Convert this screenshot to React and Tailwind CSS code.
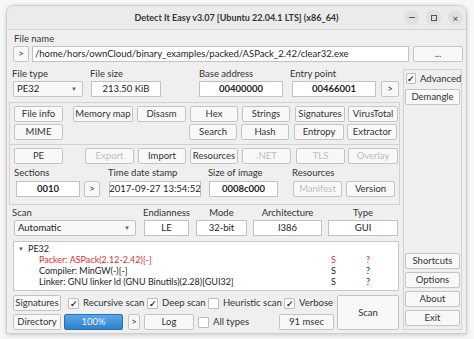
import React from "react";

function Btn({ className = "", disabled = false, children }) {
  return (
    <div
      className={
        "flex h-[16px] shrink-0 items-center justify-center rounded-[2px] border border-[#c4c4c4] bg-[#f8f8f8] leading-none " +
        (disabled ? "text-[#bdbdbd] " : "text-[#333] ") +
        className
      }
    >
      {children}
    </div>
  );
}

function Field({ className = "", bold = false, children }) {
  return (
    <div
      className={
        "flex h-[16px] shrink-0 items-center justify-center border border-[#c2c2c2] bg-white leading-none text-[#222] " +
        (bold ? "font-bold " : "") +
        className
      }
    >
      {children}
    </div>
  );
}

function Combo({ className = "", children }) {
  return (
    <div
      className={
        "flex h-[16px] shrink-0 items-center justify-between rounded-[2px] border border-[#c4c4c4] bg-[#f8f8f8] pl-[3px] pr-[5px] leading-none text-[#222] " +
        className
      }
    >
      <span>{children}</span>
      <span className="text-[6px] text-[#666]">▼</span>
    </div>
  );
}

function Check({ checked, className = "", children }) {
  return (
    <div className={"flex shrink-0 items-center gap-[4px] leading-none " + className}>
      <div className="flex h-[11px] w-[11px] items-center justify-center rounded-[1px] border border-[#bdbdbd] bg-white text-[9px] font-bold text-[#333]">
        {checked ? "✓" : ""}
      </div>
      <span>{children}</span>
    </div>
  );
}

function Label({ className = "", children }) {
  return <div className={"flex h-[13px] items-center leading-none " + className}>{children}</div>;
}

export default function App() {
  return (
    <div className="h-[339px] w-[474px] overflow-hidden whitespace-nowrap bg-[#f7f7f7] pl-[6px] pt-[5px] font-['Lato',sans-serif] text-[9.5px] text-[#333]">
      <div className="flex h-[329px] w-[461px] flex-col overflow-hidden rounded-t-[8px] border border-[#cfcfcf] bg-[#efefef] shadow-[0_1px_4px_rgba(0,0,0,0.18)]">
        {/* title bar */}
        <div className="relative flex h-[24px] shrink-0 items-center justify-center border-b border-[#d6d6d6] bg-[#ebebeb]">
          <span className="text-[9px] font-bold text-[#333]">
            Detect It Easy v3.07 [Ubuntu 22.04.1 LTS] (x86_64)
          </span>
          <div className="absolute right-[3px] top-[4px] flex gap-[7px]">
            <div className="flex h-[15px] w-[15px] items-center justify-center rounded-full bg-[#e0e0e0]">
              <div className="h-[1px] w-[6px] bg-[#555]" />
            </div>
            <div className="flex h-[15px] w-[15px] items-center justify-center rounded-full bg-[#e0e0e0]">
              <div className="h-[6px] w-[6px] border border-[#555]" />
            </div>
            <div className="flex h-[15px] w-[15px] items-center justify-center rounded-full bg-[#e0e0e0] text-[10px] leading-none text-[#444]">
              ×
            </div>
          </div>
        </div>

        {/* body */}
        <div className="flex flex-col pl-[2px]">
          <Label className="mt-[2px] pl-[5px]">File name</Label>
          <div className="mt-[1px] flex">
            <Btn className="ml-[4px] w-[16px]">&gt;</Btn>
            <Field className="ml-[3px] w-[377px] !justify-start pl-[2px] text-[#222]">
              /home/hors/ownCloud/binary_examples/packed/ASPack_2.42/clear32.exe
            </Field>
            <Btn className="ml-[4px] w-[50px]">...</Btn>
          </div>

          <div className="mt-[5px] flex">
            {/* left column */}
            <div className="flex w-[391px] shrink-0 flex-col">
              <div className="flex">
                <div className="ml-[4px] flex w-[70px] flex-col">
                  <Label className="-ml-[1px]">File type</Label>
                  <div className="mt-[1px]">
                    <Combo className="w-[70px]">PE32</Combo>
                  </div>
                </div>
                <div className="ml-[8px] flex w-[70px] flex-col">
                  <Label className="-ml-[1px]">File size</Label>
                  <Field className="mt-[1px] w-[70px]">213.50 KiB</Field>
                </div>
                <div className="ml-[38px] flex w-[84px] flex-col">
                  <Label>Base address</Label>
                  <Field bold className="mt-[1px] w-[84px]">00400000</Field>
                </div>
                <div className="ml-[9px] flex w-[84px] flex-col">
                  <Label className="-ml-[2px]">Entry point</Label>
                  <Field bold className="mt-[1px] w-[84px]">00466001</Field>
                </div>
                <div className="ml-[5px] flex flex-col">
                  <div className="h-[13px]" />
                  <Btn className="mt-[1px] w-[18px]">&gt;</Btn>
                </div>
              </div>

              {/* frame 1 */}
              <div className="mt-[5px] flex h-[43px] flex-col border border-[#d2d2d2] pt-[3px]">
                <div className="flex">
                  <Btn className="ml-[4px] w-[49px]">File info</Btn>
                  <Btn className="ml-[10px] w-[60px]">Memory map</Btn>
                  <Btn className="ml-[4px] w-[49px]">Disasm</Btn>
                  <Btn className="ml-[4px] w-[48px]">Hex</Btn>
                  <Btn className="ml-[4px] w-[48px]">Strings</Btn>
                  <Btn className="ml-[5px] w-[50px]">Signatures</Btn>
                  <Btn className="ml-[3px] w-[50px]">VirusTotal</Btn>
                </div>
                <div className="mt-[2px] flex">
                  <Btn className="ml-[4px] w-[49px]">MIME</Btn>
                  <Btn className="ml-[126px] w-[48px]">Search</Btn>
                  <Btn className="ml-[4px] w-[48px]">Hash</Btn>
                  <Btn className="ml-[5px] w-[50px]">Entropy</Btn>
                  <Btn className="ml-[3px] w-[50px]">Extractor</Btn>
                </div>
              </div>

              {/* frame 2 */}
              <div className="flex h-[60px] flex-col border border-t-0 border-[#d2d2d2] pt-[3px]">
                <div className="flex">
                  <Btn className="ml-[4px] w-[49px]">PE</Btn>
                  <Btn disabled className="ml-[22px] w-[49px]">Export</Btn>
                  <Btn className="ml-[4px] w-[48px]">Import</Btn>
                  <Btn className="ml-[4px] w-[48px]">Resources</Btn>
                  <Btn disabled className="ml-[4px] w-[49px]">.NET</Btn>
                  <Btn disabled className="ml-[5px] w-[49px]">TLS</Btn>
                  <Btn disabled className="ml-[3px] w-[50px]">Overlay</Btn>
                </div>
                <div className="mt-[2px] flex">
                  <div className="ml-[4px] flex flex-col">
                    <Label>Sections</Label>
                    <Field bold className="ml-[2px] mt-[2px] w-[64px]">0010</Field>
                  </div>
                  <div className="ml-[4px] flex flex-col">
                    <div className="h-[13px]" />
                    <Btn className="mt-[2px] w-[16px]">&gt;</Btn>
                  </div>
                  <div className="ml-[9px] flex flex-col">
                    <Label className="-ml-[1px]">Time date stamp</Label>
                    <Field className="mt-[2px] w-[92px]">2017-09-27 13:54:52</Field>
                  </div>
                  <div className="ml-[8px] flex flex-col">
                    <Label className="-ml-[1px]">Size of image</Label>
                    <Field bold className="mt-[2px] w-[69px]">0008c000</Field>
                  </div>
                  <div className="ml-[15px] flex flex-col">
                    <Label className="-ml-[1px]">Resources</Label>
                    <div className="mt-[2px] flex">
                      <Btn disabled className="w-[49px]">Manifest</Btn>
                      <Btn className="ml-[4px] w-[49px]">Version</Btn>
                    </div>
                  </div>
                </div>
              </div>

              {/* scan row */}
              <div className="mt-[1px] flex">
                <div className="ml-[5px] flex w-[122px] flex-col">
                  <Label className="-ml-[2px]">Scan</Label>
                  <div className="mt-[1px]">
                    <Combo className="w-[122px]">Automatic</Combo>
                  </div>
                </div>
                <div className="ml-[8px] flex w-[45px] flex-col">
                  <Label className="justify-center">Endianness</Label>
                  <Field className="mt-[1px] w-[45px]">LE</Field>
                </div>
                <div className="ml-[7px] flex w-[51px] flex-col">
                  <Label className="justify-center">Mode</Label>
                  <Field className="mt-[1px] w-[51px]">32-bit</Field>
                </div>
                <div className="ml-[6px] flex w-[69px] flex-col">
                  <Label className="justify-center">Architecture</Label>
                  <Field className="mt-[1px] w-[69px]">I386</Field>
                </div>
                <div className="ml-[6px] flex w-[70px] flex-col">
                  <Label className="justify-center">Type</Label>
                  <Field className="mt-[1px] w-[70px]">GUI</Field>
                </div>
              </div>

              {/* result tree */}
              <div className="ml-[4px] mt-[5px] flex h-[50px] w-[386px] flex-col border border-[#c8c8c8] bg-white pt-[1px] text-[9px] leading-[11px] text-[#222]">
                <div className="flex items-center">
                  <span className="ml-[4px] w-[9px] text-[6px] text-[#555]">▼</span>
                  <span className="ml-[1px]">PE32</span>
                </div>
                <div className="flex text-[#e03030]">
                  <span className="ml-[25px] w-[292px]">Packer: ASPack(2.12-2.42)[-]</span>
                  <span className="w-[35px]">S</span>
                  <span>?</span>
                </div>
                <div className="flex">
                  <span className="ml-[25px] w-[292px]">Compiler: MinGW(-)[-]</span>
                  <span className="w-[35px]">S</span>
                  <span>?</span>
                </div>
                <div className="flex">
                  <span className="ml-[25px] w-[292px]">Linker: GNU linker ld (GNU Binutils)(2.28)[GUI32]</span>
                  <span className="w-[35px]">S</span>
                  <span>?</span>
                </div>
              </div>

              {/* bottom */}
              <div className="mt-[4px] flex">
                <div className="flex w-[328px] flex-col">
                  <div className="flex items-center">
                    <Btn className="ml-[4px] w-[48px]">Signatures</Btn>
                    <Check checked className="ml-[7px] w-[79px]">Recursive scan</Check>
                    <Check checked className="w-[61px]">Deep scan</Check>
                    <Check className="w-[76px]">Heuristic scan</Check>
                    <Check checked>Verbose</Check>
                  </div>
                  <div className="mt-[3px] flex items-center">
                    <Btn className="ml-[4px] w-[48px]">Directory</Btn>
                    <div className="ml-[3px] flex h-[16px] w-[59px] items-center justify-center rounded-[2px] border border-[#2b6fb3] bg-gradient-to-b from-[#5aa6e6] to-[#2f80cc] text-[#eaf4ff]">
                      100%
                    </div>
                    <Btn className="ml-[5px] w-[12px]">&gt;</Btn>
                    <Btn className="ml-[4px] w-[50px]">Log</Btn>
                    <Check className="ml-[4px] w-[81px]">All types</Check>
                    <Btn className="w-[55px]">91 msec</Btn>
                  </div>
                </div>
                <Btn className="!h-[35px] w-[62px]">Scan</Btn>
              </div>
            </div>

            {/* right panel */}
            <div className="ml-[3px] mt-[2px] flex h-[261px] w-[59px] shrink-0 flex-col border border-[#d2d2d2] px-[1px]">
              <Check checked className="ml-[1px] mt-[2px] h-[13px]">Advanced</Check>
              <Btn className="mt-[4px] w-[55px]">Demangle</Btn>
              <div className="flex-1" />
              <Btn className="w-[55px]">Shortcuts</Btn>
              <Btn className="mt-[3px] w-[55px]">Options</Btn>
              <Btn className="mt-[3px] w-[55px]">About</Btn>
              <Btn className="mt-[3px] w-[55px]">Exit</Btn>
              <div className="h-[3px]" />
            </div>
          </div>
        </div>
      </div>
    </div>
  );
}
